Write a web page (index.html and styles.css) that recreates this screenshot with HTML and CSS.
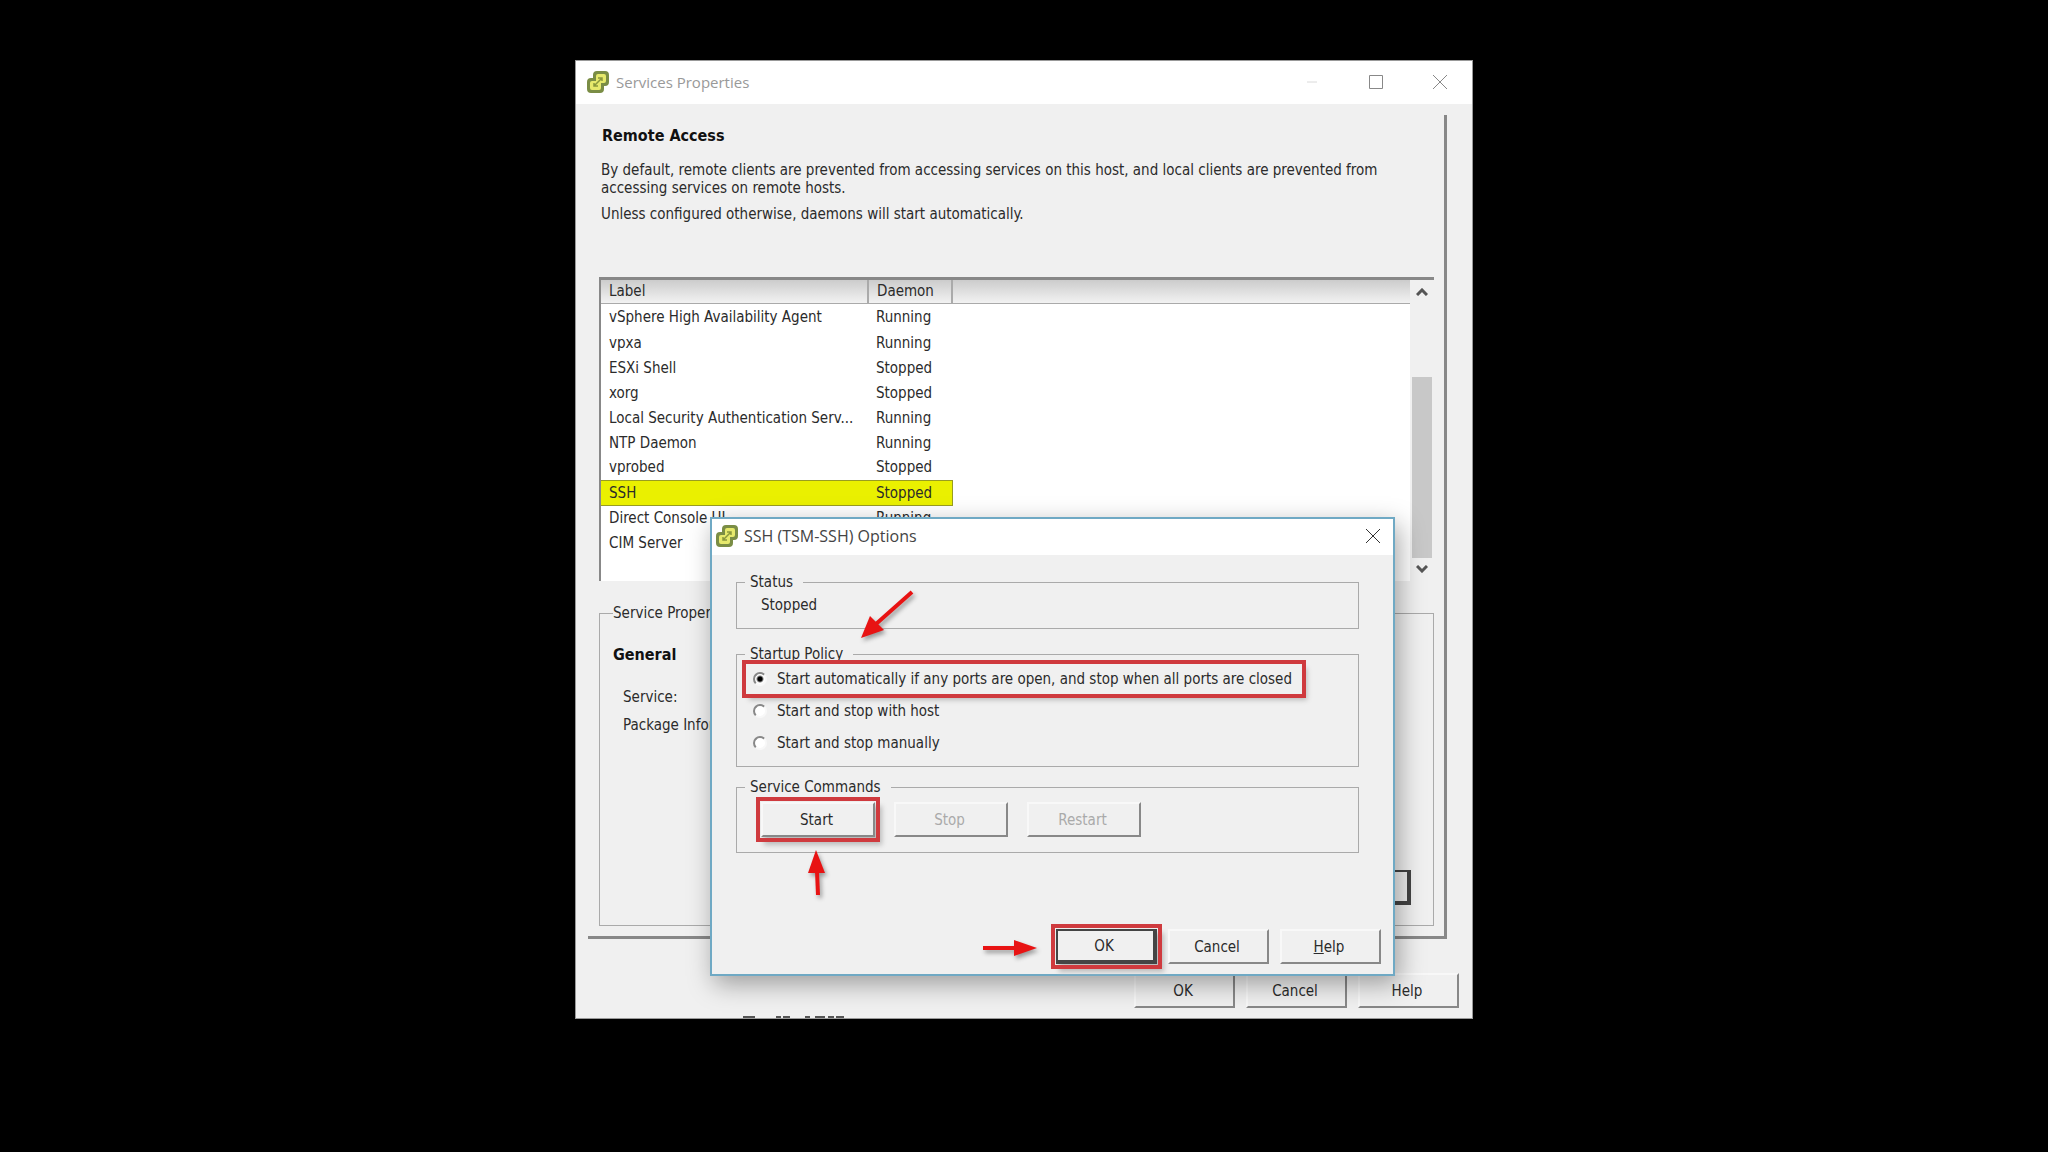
FILE: index.html
```html
<!DOCTYPE html>
<html lang="en">
<head>
    <meta charset="utf-8">
    <title>Services Properties</title>
    <link rel="stylesheet" href="styles.css">
</head>
<body>
    <svg class="defs" width="0" height="0">
        <symbol id="logo" viewBox="0 0 24 24">
            <path d="M11 1h8q4 0 4 4v7q0 4-4 4h-1v3q0 4-4 4H5q-4 0-4-4v-7q0-4 4-4h2V5q0-4 4-4z" fill="#7a8d45"/>
            <path d="M12 4h6q2 0 2 2v5q0 2-2 2h-3v5q0 2-2 2H6q-2 0-2-2v-5q0-2 2-2h4V6q0-2 2-2z" fill="#e6e96c"/>
            <path d="M8 16l8-8M12 8h4v3M8 13v3h4" fill="none" stroke="#8a983c" stroke-width="1.500"/>
        </symbol>
    </svg>

    <main class="window">
        <header class="title_bar">
            <svg class="logo"><use href="#logo"/></svg>
            <h1 class="title">Services Properties</h1>
            <button class="win_btn faint" aria-label="Minimize"><svg width="16" height="16"><path d="M3 8h10"/></svg></button>
            <button class="win_btn" aria-label="Maximize"><svg width="16" height="16"><path d="M1.500 1.500h13v13h-13z"/></svg></button>
            <button class="win_btn" aria-label="Close"><svg width="16" height="16"><path d="M1 1l14 14M15 1L1 15"/></svg></button>
        </header>

        <section class="page">
            <h2>Remote Access</h2>
            <p>By default, remote clients are prevented from accessing services on this host, and local clients are prevented from accessing services on remote hosts.</p>
            <p>Unless configured otherwise, daemons will start automatically.</p>

            <div class="list">
                <table>
                    <thead>
                        <tr><th class="col_label">Label</th><th class="col_daemon">Daemon</th><th></th></tr>
                    </thead>
                    <tbody>
                        <tr><td>vSphere High Availability Agent</td><td>Running</td></tr>
                        <tr><td>vpxa</td><td>Running</td></tr>
                        <tr><td>ESXi Shell</td><td>Stopped</td></tr>
                        <tr><td>xorg</td><td>Stopped</td></tr>
                        <tr><td>Local Security Authentication Serv...</td><td>Running</td></tr>
                        <tr><td>NTP Daemon</td><td>Running</td></tr>
                        <tr><td>vprobed</td><td>Stopped</td></tr>
                        <tr class="selected"><td>SSH</td><td>Stopped</td></tr>
                        <tr><td>Direct Console UI</td><td>Running</td></tr>
                        <tr><td>CIM Server</td><td>Running</td></tr>
                    </tbody>
                </table>
                <div class="scrollbar">
                    <svg width="12" height="8"><path d="M1 7l5-5 5 5"/></svg>
                    <div class="thumb"></div>
                    <svg width="12" height="8"><path d="M1 1l5 5 5-5"/></svg>
                </div>
            </div>

            <fieldset class="properties">
                <legend>Service Properties</legend>
                <h2>General</h2>
                <p>Service:</p>
                <p>Package Information:</p>
                <button class="btn options">Options...</button>
            </fieldset>
        </section>

        <footer class="buttons">
            <button class="btn">OK</button>
            <button class="btn">Cancel</button>
            <button class="btn">Help</button>
        </footer>
        <svg class="cut_off" width="106" height="2"><path d="M2 1h12M35 1h5M42 1h7M64 1h5M74 1h10M87 1h6M95 1h8"/></svg>

        <section class="dialog" role="dialog" aria-labelledby="dialog_title">
            <header class="title_bar">
                <svg class="logo"><use href="#logo"/></svg>
                <h1 class="title" id="dialog_title">SSH (TSM-SSH) Options</h1>
                <button class="win_btn" aria-label="Close"><svg width="16" height="16"><path d="M1 1l14 14M15 1L1 15"/></svg></button>
            </header>
            <div class="dialog_body">
                <fieldset class="status">
                    <legend>Status</legend>
                    <p>Stopped</p>
                </fieldset>
                <fieldset class="policy">
                    <legend>Startup Policy</legend>
                    <label class="marked"><input type="radio" name="policy" checked>Start automatically if any ports are open, and stop when all ports are closed</label>
                    <label><input type="radio" name="policy">Start and stop with host</label>
                    <label><input type="radio" name="policy">Start and stop manually</label>
                </fieldset>
                <fieldset class="commands">
                    <legend>Service Commands</legend>
                    <div class="command_row">
                        <button class="btn marked">Start</button>
                        <button class="btn" disabled>Stop</button>
                        <button class="btn" disabled>Restart</button>
                    </div>
                </fieldset>
            </div>
            <footer class="buttons">
                <button class="btn default marked">OK</button>
                <button class="btn">Cancel</button>
                <button class="btn"><u>H</u>elp</button>
            </footer>
            <svg class="arrow arrow_policy" width="56" height="52"><path d="M52 3L16 35"/><polygon points="1,49 10,27 24,41"/></svg>
            <svg class="arrow arrow_start" width="20" height="48"><path d="M11 46L10 22"/><polygon points="9,1 18,24 1,24"/></svg>
            <svg class="arrow arrow_ok" width="58" height="20"><path d="M3 10h32"/><polygon points="57,10 34,2 34,18"/></svg>
        </section>
    </main>
</body>
</html>
```
FILE: styles.css
```css
* { box-sizing: border-box; }
body { margin: 0; padding: 60px 16px; background: #000; color: #2b2b2b; font: 15px/18px "DejaVu Sans Condensed", "DejaVu Sans", sans-serif; }
h1, h2, p { margin: 0; }
h2 { font-size: 16px; font-weight: bold; color: #111; }
.defs { position: absolute; }

.window { position: relative; max-width: 898px; margin: 0 auto; background: #f0f0f0; border: 1px solid #999; }
.title_bar { display: flex; align-items: center; height: 43px; padding: 0 24px 2px 10px; background: #fff; }
.logo { width: 24px; height: 24px; }
.title { flex: 1; padding-left: 6px; color: #999; font: 15px/20px "Open Sans", sans-serif; }
.win_btn { width: 16px; height: 16px; margin-left: 48px; padding: 0; border: 0; background: none; }
.win_btn svg { display: block; fill: none; stroke: #888; stroke-width: 1; }
.faint { opacity: 0.3; }

.page { margin: 11px 25px 0 12px; padding: 12px 10px 10px 11px; border-right: 3px solid #888; border-bottom: 3px solid #888; }
.page > h2 { padding-left: 3px; }
.page > p { padding: 0 40px 0 2px; margin-top: 8px; }
.page > h2 + p { margin-top: 16px; }

.list { display: flex; height: 304px; margin-top: 54px; border-top: 3px solid #888; border-left: 2px solid #888; background: #fff; }
table { flex: 1; align-self: flex-start; border-collapse: collapse; table-layout: fixed; }
.col_label { width: 267px; }
.col_daemon { width: 84px; }
th { height: 23px; padding: 0 8px; background: linear-gradient(#ccc, #f2f2f2); border-right: 2px solid #aaa; border-bottom: 1px solid #aaa; font-weight: normal; text-align: left; }
th:last-child { border-right: 0; }
td { height: 25px; padding: 0 8px; white-space: nowrap; }
tr:first-child td { height: 27px; }
.selected td { background: #eaf000; border-top: 1px solid #999d20; border-bottom: 1px solid #999d20; }
.selected td:last-child { border-right: 1px solid #999d20; }
.scrollbar { display: flex; flex-direction: column; align-items: center; justify-content: space-between; width: 24px; padding: 8px 0; background: #f0f0f0; }
.scrollbar svg { fill: none; stroke: #555; stroke-width: 3; }
.thumb { width: 20px; height: 181px; margin: 74px 0 0; background: #c8c8c8; }

fieldset { min-width: 0; margin: 0; border: 1px solid #aaa; }
legend { padding: 0 10px 0 5px; }
.properties { display: flex; flex-direction: column; height: 322px; margin-top: 23px; padding: 24px 22px 20px 13px; }
.properties legend { padding-left: 0; }
.properties p { padding: 24px 0 0 10px; }
.properties p + p { padding-top: 10px; }
.properties .options { align-self: flex-end; margin-top: auto; }

.buttons { display: flex; justify-content: flex-end; gap: 11px; }
.window > .buttons { padding: 34px 13px 10px; }
.btn { width: 101px; height: 35px; padding: 0 3px 0 0; border: 2px solid; border-color: #f8f8f8 #888 #888 #f8f8f8; background: #f0f0f0; color: #2b2b2b; font: inherit; }
.btn:disabled { color: #aaa; }
.options, .default { border-color: #444; border-right-width: 4px; border-bottom-width: 4px; }
.cut_off { position: absolute; bottom: 0; left: 165px; fill: none; stroke: #555; stroke-width: 2; }

.dialog { position: absolute; top: 456px; left: 134px; right: 77px; background: #f0f0f0; border: 2px solid #6fa9c4; box-shadow: 4px 8px 24px rgba(0, 0, 0, 0.35); }
.dialog .title_bar { height: 36px; padding: 0 12px 2px 3px; }
.dialog .title { padding-left: 5px; color: #444; font-size: 16px; }
.dialog .win_btn svg { stroke: #333; }
.dialog_body { padding: 18px 34px 0 24px; }
.dialog fieldset { padding: 0 0 0 8px; }
.status { height: 56px; }
.status p { padding: 5px 0 0 16px; }
.policy { height: 122px; margin-top: 16px; }
.policy label { display: flex; align-items: center; gap: 10px; width: 558px; height: 32px; padding-left: 8px; white-space: nowrap; }
input[type="radio"] { appearance: none; flex: none; width: 14px; height: 14px; margin: 0; border: 2px solid; border-color: #888 #f8f8f8 #f8f8f8 #888; border-radius: 50%; background: #fff; }
input[type="radio"]:checked { background: radial-gradient(circle, #000 2px, #fff 4px); }
.marked { outline: 4px solid #cf3a3e; outline-offset: 1px; box-shadow: 5px 6px 5px 2px #bbb; }
label.marked { outline-offset: -1px; box-shadow: 4px 5px 5px #bbb; }
.commands { height: 75px; margin-top: 11px; }
.command_row { display: flex; gap: 19px; padding: 6px 0 0 16px; }
.command_row .btn { width: 114px; }
.dialog .buttons { padding: 76px 12px 10px; }
.arrow { position: absolute; fill: #e81313; stroke: #e81313; filter: drop-shadow(2px 3px 2px #999); }
.arrow path { stroke-width: 4; }
.arrow polygon { stroke: none; }
.arrow_policy { top: 70px; left: 148px; }
.arrow_start { top: 330px; left: 95px; }
.arrow_ok { top: 419px; left: 268px; }
```
